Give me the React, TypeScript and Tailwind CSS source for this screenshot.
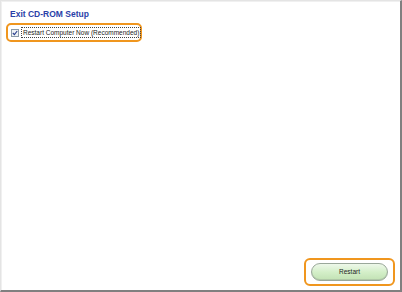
export default function App() {
	return (
		<div
			className="w-[402px] h-[292px] bg-white flex flex-col border-t border-l border-t-[#e4e4e4] border-l-[#e4e4e4] border-r-2 border-b-2 border-r-[#808080] border-b-[#808080]"
			style={{ fontFamily: "Arial, 'Liberation Sans', sans-serif" }}>
			<div className="flex flex-col flex-1 border-t border-l border-[#f0f0f0] pl-[4px] pt-[7px] pr-[4px] pb-[4px]">
				<h1 className="text-[8.5px] font-bold text-[#2a3fa8] leading-[11px] pl-[4px]">
					Exit CD-ROM Setup
				</h1>
				<div className="mt-[3px] self-start border-2 border-[#f0961e] rounded-[5px] h-[19px] flex items-center pl-[3px] pr-[3px] w-[136px]">
					<span className="w-[8px] h-[8px] border border-[#8a9aa8] bg-[#eef2f6] flex items-center justify-center">
						<svg width="6" height="6" viewBox="0 0 6 6">
							<path d="M0.8 3 L2.4 4.6 L5.2 1" stroke="#2a3f8e" strokeWidth="1.1" fill="none" />
						</svg>
					</span>
					<span className="ml-[2px] text-[6.5px] text-[#222] leading-[9px] border border-dotted border-[#444] px-[1px] whitespace-nowrap">
						Restart Computer Now (Recommended)
					</span>
				</div>
				<div className="flex-1" />
				<div className="self-end mr-[1px] border-2 border-[#f0961e] rounded-[6px] w-[91px] h-[28px] flex items-center justify-center">
					<button className="w-[77px] h-[18px] rounded-full border border-[#9aa89a] bg-gradient-to-b from-[#eef8ea] via-[#d4efc9] to-[#c2e2b4] text-[6.5px] text-[#222] shadow-[inset_0_-1px_0_#b0c8a8]">
						Restart
					</button>
				</div>
			</div>
		</div>
	);
}
